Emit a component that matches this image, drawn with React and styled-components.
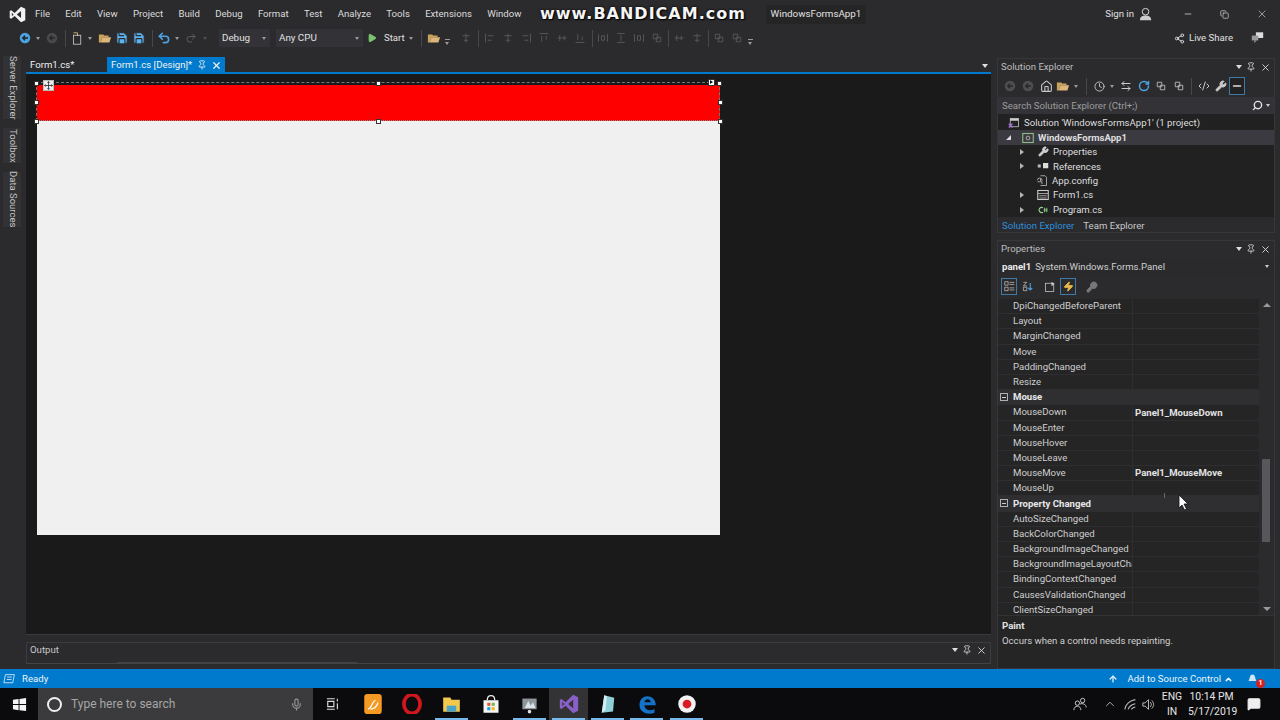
import React from 'react';
import styled, { createGlobalStyle } from 'styled-components';
import { X, Pin, Home, Wrench, Search, Minus, Copy, RotateCw, Clock, ArrowUp, ChevronUp, MessageSquare, Mic, Save, Undo2, Redo2, Play, Share2, ArrowLeftRight, Code2, KeyRound, Zap } from 'lucide-react';

const Global = createGlobalStyle`
  html, body { margin: 0; padding: 0; background: #2d2d30; }
  * { box-sizing: border-box; }
`;

const Page = styled.div`
  width: 1280px; height: 720px; overflow: hidden; display: flex; flex-direction: column;
  background: #2b2b2d; color: #d4d4d4; font: 9.6px/1.2 Roboto, "Liberation Sans", sans-serif;
`;
const TitleBar = styled.header`height: 27px; display: flex; align-items: center; padding: 1px 0 0 9px; position: relative;`;
const Logo = styled.svg`width: 17px; height: 17px; margin-right: 9px; flex: none; color: #f2f2f2;`;
const Menu = styled.nav`display: flex; gap: 15.3px; color: #dcdcdc; width: 487px; flex: none; white-space: nowrap;`;
const Watermark = styled.div`
  margin-left: 18px; width: 206px; flex: none; color: #f5f5f5; font: 700 16px/1 "DejaVu Sans", sans-serif; white-space: nowrap;
  letter-spacing: 1px; text-shadow: 0 0 3px #000, 1px 1px 1px #000;
`;
const ProjectName = styled.div`
  margin-left: 20px; width: 100px; height: 19px; display: flex; align-items: center; justify-content: center;
  background: #252526; color: #e2e2e2; font-size: 9.8px;
`;
const SignIn = styled.div`margin-left: auto; display: flex; align-items: center; gap: 5px; color: #e0e0e0; margin-right: 15px;`;
const WindowBtn = styled.div`width: 37px; display: flex; justify-content: center; color: #c8c8c8;`;
const UserGlyph = styled.svg`width: 15px; height: 15px;`;

const ToolBar = styled.div`height: 22px; display: flex; align-items: center; padding-left: 18px;`;
const Slot = styled.div`
  width: ${p => p.$w}px; flex: none; display: flex; align-items: center; justify-content: center; height: 18px;
  opacity: ${p => p.$dim ? .32 : 1}; color: ${p => p.$c || '#c8c8c8'};
`;
const Sep = styled.div`width: ${p => p.$w || 6}px; flex: none; height: 17px; position: relative; &::after { content: ''; position: absolute; left: 50%; top: 0; height: 100%; width: 1px; background: #48484b; }`;
const Caret = styled.i`display: block; width: 0; height: 0; border-left: ${p => p.$big ? 3.5 : 2.5}px solid transparent; border-right: ${p => p.$big ? 3.5 : 2.5}px solid transparent; border-top: ${p => p.$big ? 4 : 3}px solid ${p => p.$c || '#9a9a9a'};`;
const CaretBar = styled.i`display: block; width: 5px; height: 6px; border-top: 1px solid #999; position: relative; margin-top: 8px; &::after { content: ''; position: absolute; left: 0; top: 2px; border-left: 2.5px solid transparent; border-right: 2.5px solid transparent; border-top: 3px solid #999; }`;
const Combo = styled.div`
  width: ${p => p.$w}px; margin-left: ${p => p.$ml}px; height: 18px; flex: none; background: #333337; display: flex; align-items: center; justify-content: space-between;
  padding: 0 4px 0 3px; color: #e0e0e0; font-size: 9.8px;
`;
const StartLabel = styled.span`color: #e0e0e0; margin-left: 3px; width: 21px; flex: none;`;
const LiveShare = styled.div`margin-left: auto; display: flex; align-items: center; gap: 4px; margin-right: 18px; color: #e0e0e0;`;
const FeedbackBox = styled.svg`width: 13px; height: 14px; margin-right: 16px;`;

const Main = styled.main`flex: 1; min-height: 0; display: flex; padding-top: 7px;`;
const SideRail = styled.aside`width: 26px; flex: none; display: flex; flex-direction: column; gap: 9px;`;
const RailTab = styled.div`
  writing-mode: vertical-rl; height: ${p => p.$h}px; margin-left: 3px; width: 18px; display: flex; align-items: center; padding-left: 2px;
  justify-content: center; background: #323235; color: #c4c4c4; font-size: 9.5px; white-space: nowrap;
`;
const Center = styled.section`width: 965px; flex: none; display: flex; flex-direction: column; padding-bottom: 5px;`;
const TabStrip = styled.div`height: 15px; margin-top: 1px; display: flex; position: relative; flex: none;`;
const FileTab = styled.div`
  width: ${p => p.$w}px; flex: none; display: flex; align-items: center; padding-left: ${p => p.$pl}px; height: 16px;
  background: ${p => p.$active ? '#007acc' : 'transparent'}; color: #f2f2f2; white-space: nowrap;
`;
const Overflow = styled.div`position: absolute; right: 3px; top: 7px;`;
const Rule = styled.div`height: 2px; background: #007acc; flex: none;`;
const Designer = styled.div`flex: 1; min-height: 0; background: #1a1a1b; border-bottom: 1px solid #3a3a3d; padding: 11px 0 0 11px; display: flex; flex-direction: column;`;
const FormBody = styled.div`width: 683px; height: 450px; background: #f0f0f0; position: relative; flex: none;`;
const RedPanel = styled.div`height: 36px; background: #ff0000; border-bottom: 1px dotted #888;`;
const Selection = styled.div`position: absolute; left: -1px; top: -3px; width: 684px; height: 39px; border: 1px dashed #77777a; border-bottom: 0;`;
const Handle = styled.i`position: absolute; width: 5px; height: 5px; background: #fff; border: 1px solid #333; left: ${p => p.$x}px; top: ${p => p.$y}px;`;
const MoveGlyph = styled.div`position: absolute; left: 6px; top: -5px; width: 11px; height: 11px; background: #ececec; border: 1px solid #bbb; display: flex; align-items: center; justify-content: center;`;
const SmartTag = styled.div`position: absolute; left: 671px; top: -6px; width: 7px; height: 7px; background: #fff; border: 1px solid #333; &::after { content: ''; position: absolute; left: 1px; top: 0; border-left: 3px solid #111; border-top: 2.5px solid transparent; border-bottom: 2.5px solid transparent; }`;
const OutputPanel = styled.div`height: 22px; margin-top: 7px; border: 1px solid #3c3c3f; border-bottom-color: #444; display: flex; align-items: center; padding: 0 3px 6px 3px; position: relative; flex: none;`;
const OutputLabel = styled.span`color: #c8c8c8; margin-right: 5px;`;
const Ghost = styled.i`position: absolute; left: 90px; bottom: 0; width: 240px; height: 1px; background: #414144;`;
const Grip = styled.div`flex: 1; height: 5px; background-image: radial-gradient(#4a4a4d 40%, transparent 45%); background-size: 2px 2px;`;
const HeadIcons = styled.div`display: flex; align-items: center; gap: 4px; margin-left: 8px; color: #d8d8d8;`;

const Right = styled.section`width: 278px; margin-left: 6px; flex: none; display: flex; flex-direction: column; padding-top: 2px;`;
const Dock = styled.div`border: 1px solid #37373a; height: ${p => p.$h}px; display: flex; flex-direction: column; margin-bottom: ${p => p.$mb || 0}px;`;
const DockHead = styled.div`height: 16px; display: flex; align-items: center; padding: 0 3px 0 3px; color: #bdbdbd; flex: none;`;
const SolTools = styled.div`height: 22px; display: flex; align-items: center; padding-left: 3px; flex: none;`;
const ActiveBtn = styled.div`width: 16px; height: 18px; border: 1px solid #3d7aa8; background: #222; display: flex; align-items: center; justify-content: center; flex: none;`;
const SearchRow = styled.div`height: 17px; display: flex; align-items: center; justify-content: space-between; background: #333337; padding: 0 4px 0 4px; color: #9c9c9c; flex: none;`;
const SearchEnd = styled.div`display: flex; align-items: center; gap: 3px; color: #e5e5e5;`;
const Tree = styled.div`flex: 1; background: #212122; padding-top: 2px;`;
const TreeRow = styled.div`height: 14.4px; display: flex; align-items: center; padding-left: ${p => p.$pl}px; background: ${p => p.$sel ? '#3a3a40' : 'transparent'}; font-weight: ${p => p.$sel ? 700 : 400}; color: #dedede;`;
const Arrow = styled.i`width: 0; height: 0; flex: none; border-left: 4px solid #b5b5b5; border-top: 3.5px solid transparent; border-bottom: 3.5px solid transparent; margin-right: ${p => p.$mr}px; position: relative;`;
const ArrowOpen = styled.i`width: 0; height: 0; flex: none; border-bottom: 5px solid #ddd; border-left: 5px solid transparent; margin-right: ${p => p.$mr}px;`;
const Spacer = styled.i`width: ${p => p.$w}px; flex: none;`;
const NodeIcon = styled.span`width: 12px; height: 12px; flex: none; margin-right: ${p => p.$mr ?? 4}px; display: flex; align-items: center; justify-content: center; color: #ddd;`;
const BottomTabs = styled.div`height: 15px; display: flex; flex: none; align-items: center; padding-top: 2px;`;
const BottomTab = styled.span`padding: 0 4px 0 4px; color: ${p => p.$on ? '#2b8fdc' : '#c8c8c8'}; margin-right: ${p => p.$mr || 0}px;`;
const ObjectRow = styled.div`height: 18px; margin-top: 1px; display: flex; align-items: center; padding: 0 5px 1px 4px; gap: 4px; background: #2a2a2c; flex: none;`;
const Strong = styled.b`color: #eaeaea;`;
const ObjectType = styled.span`color: #cfcfcf; flex: 1;`;
const PropTools = styled.div`height: 23px; display: flex; align-items: center; padding: 0 0 2px 3px; flex: none;`;
const ToggleBtn = styled.div`width: 16px; height: 17px; flex: none; display: flex; align-items: center; justify-content: center; margin-right: ${p => p.$mr || 0}px; border: 1px solid ${p => p.$on ? '#3d7aa8' : 'transparent'}; color: #ccc;`;
const GridWrap = styled.div`flex: none; height: 316px; display: flex; background: #252526; overflow: hidden;`;
const PropList = styled.div`flex: 1; min-width: 0;`;
const PropRow = styled.div`
  height: 15.2px; display: grid; grid-template-columns: 119px 1fr; align-items: center; padding-left: 15px; position: relative;
  color: #cfcfcf; border-bottom: 1px solid #2e2e30;
  background: ${p => p.$cat ? '#2f2f32' : 'transparent'}; font-weight: ${p => p.$cat ? 700 : 400};
`;
const PropName = styled.span`overflow: hidden; white-space: nowrap; line-height: 14px; color: ${p => p.$cat ? '#e8e8e8' : 'inherit'};`;
const PropValue = styled.span`font-weight: 700; color: #e2e2e2; padding-left: 2px; border-left: 1px solid ${p => p.$cat ? 'transparent' : '#2e2e30'}; height: 100%; display: flex; align-items: center;`;
const Expander = styled.i`position: absolute; left: 2px; top: 3px; width: 8px; height: 8px; border: 1px solid #b0b0b0; &::after { content: ''; position: absolute; left: 1px; right: 1px; top: 2.5px; height: 1px; background: #ccc; }`;
const ScrollBar = styled.div`width: 15px; display: flex; flex-direction: column; align-items: center; padding: 4px 0; justify-content: space-between; position: relative; background: #2b2b2d;`;
const ScrollThumb = styled.i`position: absolute; left: 3px; width: 8px; top: 160px; height: 83px; background: #58585c;`;
const CaretUp = styled.i`border-left: 4px solid transparent; border-right: 4px solid transparent; border-bottom: 4px solid #999;`;
const CaretDown = styled.i`border-left: 4px solid transparent; border-right: 4px solid transparent; border-top: 4px solid #999;`;
const Description = styled.div`flex: 1; padding: 4px 4px; background: #252526; border-top: 1px solid #333; color: #cfcfcf;`;
const DescTitle = styled.div`font-weight: 700; margin-bottom: 3px; color: #e2e2e2;`;
const PointerWrap = styled.svg`position: absolute; left: 1178px; top: 494px; width: 11px; height: 17px;`;
const Tick = styled.i`position: absolute; left: 1164px; top: 493px; width: 1px; height: 5px; background: #666;`;

const StatusBar = styled.footer`height: 19px; flex: none; background: #007acc; color: #eaf5fc; display: flex; align-items: center; padding: 1px 0 0 3px;`;
const ReadyText = styled.span`margin-left: 6px;`;
const SourceCtl = styled.div`margin-left: auto; display: flex; align-items: center; gap: 3px;`;
const BellWrap = styled.div`width: 16px; height: 14px; margin: 0 18px 0 13px; position: relative; color: #cfe6f6;`;
const Badge = styled.b`position: absolute; right: -3px; bottom: -2px; width: 9px; height: 9px; border-radius: 50%; background: #d81e1e; color: #fff; font-size: 7px; line-height: 9px; text-align: center;`;

const TaskBar = styled.footer`height: 32px; flex: none; background: #0b0b0d; display: flex; align-items: center; color: #e6e6e6;`;
const StartBtn = styled.div`width: 38px; display: flex; justify-content: center;`;
const SearchBox = styled.div`width: 275px; height: 32px; background: #3b3b3d; display: flex; align-items: center; padding: 0 10px 0 9px; color: #a6a6a6; font-size: 12px; flex: none;`;
const Ring = styled.i`width: 15px; height: 15px; border: 2px solid #eee; border-radius: 50%; margin-right: 9px; flex: none;`;
const SearchHint = styled.span`flex: 1;`;
const TaskSlot = styled.div`width: 39px; height: 32px; flex: none; display: flex; align-items: center; justify-content: center; position: relative; color: #8a5fc8; background: ${p => p.$active ? '#333336' : 'transparent'}; margin-left: ${p => p.$ml || 0}px;
  &::after { content: ''; display: ${p => p.$open ? 'block' : 'none'}; position: absolute; left: 3px; right: 3px; bottom: 0; height: 2px; background: #76b9ed; }`;
const Tray = styled.div`margin-left: auto; display: flex; align-items: center; height: 32px; color: #ddd;`;
const TrayIcon = styled.div`width: ${p => p.$w}px; display: flex; justify-content: center; flex: none;`;
const TrayStack = styled.div`width: ${p => p.$w}px; text-align: center; flex: none; line-height: 15px; font-size: 10.4px; color: #e4e4e4;`;

const S = ({ s = 12, children, vb = '0 0 16 16', ...r }) => <svg width={s} height={s} viewBox={vb} {...r}>{children}</svg>;
const vsPath = 'M17 1 L8 10 L3 6 L1 7 V17 L3 18 L8 14 L17 23 L23 20 V4 Z M4 9.5 L6.5 12 L4 14.5 Z M17 7 V17 L11 12 Z';
const Circle = ({ c, arrow }) => <S s={12}><circle cx="8" cy="8" r="7" fill={c} />{arrow && <path d="M12 8H5M8 5L5 8l3 3" stroke="#222" strokeWidth="1.8" fill="none" />}</S>;
const Folder = ({ s = 14 }) => <S s={s}><path d="M1 4h5l1 1h5v2H5L3 13H1z" fill="#c9a35a" /><path d="M5 7h10l-2 6H3z" fill="#dcb67a" /></S>;
const Faded = ({ d }) => <S s={12}><path d={d} stroke="#bbb" strokeWidth="1.2" fill="none" /></S>;
const fadeA = 'M2 2v12M5 5h8M5 11h5', fadeB = 'M8 2v12M3 5h10M5 11h6', fadeC = 'M14 2v12M3 5h8M6 11h5', fadeD = 'M2 2h12M5 5v8M11 5v5', fadeE = 'M2 8h12M5 4v8M11 5v6', fadeF = 'M2 14h12M5 3v8M11 6v5', fadeG = 'M2 3v10M14 3v10M6 5h4v6H6z', fadeH = 'M3 2h10M3 14h10M8 4v8', fadeI = 'M3 3h6v6H3zM7 7h6v6H7z';

const menu = ['File', 'Edit', 'View', 'Project', 'Build', 'Debug', 'Format', 'Test', 'Analyze', 'Tools', 'Extensions', 'Window'];
const props = [
  ['DpiChangedBeforeParent'], ['Layout'], ['MarginChanged'], ['Move'], ['PaddingChanged'], ['Resize'],
  ['Mouse', '', true], ['MouseDown', 'Panel1_MouseDown'], ['MouseEnter'], ['MouseHover'], ['MouseLeave'], ['MouseMove', 'Panel1_MouseMove'], ['MouseUp'],
  ['Property Changed', '', true], ['AutoSizeChanged'], ['BackColorChanged'], ['BackgroundImageChanged'], ['BackgroundImageLayoutChanged'], ['BindingContextChanged'], ['CausesValidationChanged'], ['ClientSizeChanged'],
];
const handles = [[-3, -4], [339, -4], [680, -4], [-3, 15], [681, 15], [-3, 34], [339, 34], [681, 34]];

const PanelHead = ({ title }) => (
  <DockHead>{title}<Spacer $w={6} /><Grip /><HeadIcons><Caret $big $c="#ddd" /><Pin size={10} /><X size={11} /></HeadIcons></DockHead>
);

export default function App() {
  return (
    <Page>
      <Global />
      <TitleBar>
        <Logo viewBox="0 0 24 24"><path d={vsPath} fill="currentColor" fillRule="evenodd" /></Logo>
        <Menu>{menu.map(m => <span key={m}>{m}</span>)}</Menu>
        <Watermark>www.BANDICAM.com</Watermark>
        <ProjectName>WindowsFormsApp1</ProjectName>
        <SignIn>Sign in<UserGlyph viewBox="0 0 16 16"><circle cx="7" cy="5" r="3.5" fill="none" stroke="#ddd" /><path d="M1 14c0-4 3-5 6-5s6 1 6 5z" fill="#ccc" /></UserGlyph></SignIn>
        <WindowBtn><Minus size={10} /></WindowBtn>
        <WindowBtn><Copy size={9} /></WindowBtn>
        <WindowBtn><X size={12} strokeWidth={1.4} /></WindowBtn>
      </TitleBar>

      <ToolBar>
        <Slot $w={14}><Circle c="#4aa3e0" arrow /></Slot><Slot $w={12}><Caret /></Slot>
        <Slot $w={16} $dim><Circle c="#888" arrow /></Slot><Sep $w={10} />
        <Slot $w={14}><S s={13}><rect x="3" y="4" width="9" height="11" fill="none" stroke="#ccc" /><path d="M3 1h5v4" stroke="#e8c77a" fill="none" /></S></Slot><Slot $w={12}><Caret /></Slot>
        <Slot $w={18}><Folder /></Slot>
        <Slot $w={16} $c="#5cb2ee"><Save size={14} fill="#5cb2ee" stroke="#2d2d30" /></Slot>
        <Slot $w={18} $c="#5cb2ee"><Save size={14} fill="#5cb2ee" stroke="#2d2d30" /></Slot><Sep $w={7} />
        <Slot $w={17} $c="#4aa3e0"><Undo2 size={14} strokeWidth={2.8} /></Slot><Slot $w={10}><Caret /></Slot>
        <Slot $w={18} $dim><Redo2 size={12} /></Slot><Slot $w={10} $dim><Caret /></Slot>
        <Combo $w={51} $ml={9}>Debug<Caret /></Combo>
        <Combo $w={87} $ml={6}>Any CPU<Caret /></Combo>
        <Slot $w={18} $c="#7cc36e"><Play size={10} fill="#7cc36e" /></Slot>
        <StartLabel>Start</StartLabel>
        <Slot $w={12}><Caret /></Slot><Sep $w={8} />
        <Slot $w={18}><Folder /></Slot><Slot $w={9}><CaretBar /></Slot><Spacer $w={5} />
        {[fadeB].map((d, i) => <Slot key={i} $w={18} $dim><Faded d={d} /></Slot>)}<Sep $w={6} />
        {[fadeA, fadeB, fadeC].map((d, i) => <Slot key={i} $w={18} $dim><Faded d={d} /></Slot>)}
        {[fadeD, fadeE, fadeF].map((d, i) => <Slot key={i} $w={18} $dim><Faded d={d} /></Slot>)}<Sep $w={5} />
        {[fadeG, fadeH, fadeG, fadeI].map((d, i) => <Slot key={i} $w={18} $dim><Faded d={d} /></Slot>)}<Sep $w={4} />
        {[fadeE, fadeB].map((d, i) => <Slot key={i} $w={18} $dim><Faded d={d} /></Slot>)}<Sep $w={4} />
        <Slot $w={18} $dim><Faded d={fadeI} /></Slot><Slot $w={18} $dim><Faded d={fadeI} /></Slot><Slot $w={8}><CaretBar /></Slot>
        <LiveShare><Share2 size={11} />Live Share</LiveShare>
        <FeedbackBox viewBox="0 0 16 16"><rect x="6" y="1" width="9" height="7" fill="#ddd" /><rect x="1" y="5" width="8" height="6" fill="#999" /><path d="M4 14v-3h3" fill="#999" /></FeedbackBox>
      </ToolBar>

      <Main>
        <SideRail>
          <RailTab $h={63}>Server Explorer</RailTab>
          <RailTab $h={35}>Toolbox</RailTab>
          <RailTab $h={55}>Data Sources</RailTab>
        </SideRail>
        <Center>
          <TabStrip>
            <FileTab $w={81} $pl={4}>Form1.cs*</FileTab>
            <FileTab $w={118} $pl={4} $active>Form1.cs [Design]*<Spacer $w={5} /><Pin size={10} /><Spacer $w={4} /><X size={11} strokeWidth={2.6} /></FileTab>
            <Overflow><Caret $big $c="#ddd" /></Overflow>
          </TabStrip>
          <Rule />
          <Designer>
            <FormBody>
              <RedPanel />
              <Selection />
              {handles.map(([x, y], i) => <Handle key={i} $x={x} $y={y} />)}
              <MoveGlyph><S s={9}><path d="M8 1v14M1 8h14M8 1L6 3M8 1l2 2M8 15l-2-2M8 15l2-2M1 8l2-2M1 8l2 2M15 8l-2-2M15 8l-2 2" stroke="#222" strokeWidth="1.4" fill="none" /></S></MoveGlyph>
              <SmartTag />
            </FormBody>
          </Designer>
          <OutputPanel>
            <OutputLabel>Output</OutputLabel><Grip />
            <HeadIcons><Caret $big $c="#ddd" /><Pin size={10} /><X size={11} /></HeadIcons>
            <Ghost />
          </OutputPanel>
        </Center>
        <Right>
          <Dock $h={175} $mb={7}>
            <PanelHead title="Solution Explorer" />
            <SolTools>
              <Slot $w={18} $dim><Circle c="#999" arrow /></Slot><Slot $w={18} $dim><Circle c="#999" arrow /></Slot>
              <Slot $w={18}><Home size={13} /></Slot><Slot $w={16}><Folder /></Slot><Slot $w={10}><Caret /></Slot>
              <Sep $w={10} /><Slot $w={16}><Clock size={11} /></Slot><Slot $w={10}><Caret /></Slot>
              <Slot $w={18} $c="#ccc"><ArrowLeftRight size={12} /></Slot><Slot $w={17} $c="#4aa3e0"><RotateCw size={12} strokeWidth={3} /></Slot>
              <Slot $w={18}><Faded d={fadeI} /></Slot><Slot $w={17}><Faded d={fadeI} /></Slot><Sep $w={8} />
              <Slot $w={17}><Code2 size={12} /></Slot><Slot $w={17}><Wrench size={12} fill="#ccc" /></Slot>
              <ActiveBtn><Minus size={12} strokeWidth={3} color="#ddd" /></ActiveBtn>
            </SolTools>
            <SearchRow>Search Solution Explorer (Ctrl+;)<SearchEnd><Search size={11} strokeWidth={3} style={{ transform: 'scaleX(-1)' }} /><Caret $c="#ccc" /></SearchEnd></SearchRow>
            <Tree>
              <TreeRow $pl={10}><NodeIcon $mr={4}><S s={12}><rect x="3" y="2" width="11" height="11" fill="none" stroke="#ccc" /><rect x="3" y="2" width="11" height="3" fill="#ccc" /><path d="M1 9l5 5M6 9l-5 5" stroke="#a678dc" strokeWidth="1.5" /></S></NodeIcon>Solution 'WindowsFormsApp1' (1 project)</TreeRow>
              <TreeRow $pl={8} $sel><ArrowOpen $mr={11} /><NodeIcon $mr={4}><S s={12}><rect x="1" y="2" width="14" height="12" fill="none" stroke="#8fb98a" strokeWidth="1.5" /><circle cx="8" cy="8" r="2.5" fill="none" stroke="#ccc" /></S></NodeIcon>WindowsFormsApp1</TreeRow>
              <TreeRow $pl={22}><Arrow $mr={13} /><NodeIcon><Wrench size={11} fill="#ccc" /></NodeIcon>Properties</TreeRow>
              <TreeRow $pl={22}><Arrow $mr={13} /><NodeIcon><S s={12}><rect x="1" y="6" width="4" height="4" fill="#bbb" /><rect x="8" y="4" width="7" height="7" fill="#ddd" /></S></NodeIcon>References</TreeRow>
              <TreeRow $pl={38}><NodeIcon><S s={12}><path d="M6 1h6l2 2v11H6M6 5v3M2 7a3 3 0 0 1 6 0v1M2 9h6v3" stroke="#ccc" fill="none" /></S></NodeIcon>App.config</TreeRow>
              <TreeRow $pl={22}><Arrow $mr={13} /><NodeIcon><S s={12}><rect x="1" y="2" width="14" height="12" fill="none" stroke="#ccc" strokeWidth="1.4" /><path d="M1 6h14M3 9h10M3 12h10" stroke="#ccc" /></S></NodeIcon>Form1.cs</TreeRow>
              <TreeRow $pl={22}><Arrow $mr={13} /><NodeIcon><S s={12}><path d="M8 5a3.5 3.5 0 1 0 0 6" stroke="#8fd18a" strokeWidth="1.6" fill="none" /><path d="M10 5v6M13 5v6M9 7h5M9 9h5" stroke="#8fd18a" /></S></NodeIcon>Program.cs</TreeRow>
            </Tree>
            <BottomTabs><BottomTab $on $mr={1}>Solution Explorer</BottomTab><BottomTab>Team Explorer</BottomTab></BottomTabs>
          </Dock>
          <Dock $h={429}>
            <PanelHead title="Properties" />
            <ObjectRow><Strong>panel1</Strong><ObjectType>System.Windows.Forms.Panel</ObjectType><Caret $c="#ccc" /></ObjectRow>
            <PropTools>
              <ToggleBtn $on $mr={2}><S s={11}><path d="M1 1h5v5H1zM8 2h7M8 5h7M1 9h5v5H1zM8 10h7M8 13h7" stroke="#ccc" fill="none" /></S></ToggleBtn>
              <ToggleBtn $mr={7}><S s={11}><path d="M2 2h5L2 7h5M2 9h5v5H2z" stroke="#ccc" fill="none" /><path d="M12 3v10m-3-3 3 3 3-3" stroke="#4aa3e0" strokeWidth="1.6" fill="none" /></S></ToggleBtn>
              <ToggleBtn $mr={2}><S s={12}><rect x="2" y="3" width="11" height="11" fill="none" stroke="#ccc" /><path d="M10 1l4 3-4 3z" fill="#ccc" /></S></ToggleBtn>
              <ToggleBtn $on $mr={8}><Zap size={11} color="#e8b84a" fill="#e8b84a" /></ToggleBtn>
              <ToggleBtn><KeyRound size={12} color="#777" fill="#777" /></ToggleBtn>
            </PropTools>
            <GridWrap>
              <PropList>
                {props.map(([n, v, cat]) => (
                  <PropRow key={n} $cat={cat}>
                    {cat && <Expander />}
                    <PropName $cat={cat}>{n}</PropName>
                    <PropValue $cat={cat}>{v}</PropValue>
                  </PropRow>
                ))}
              </PropList>
              <ScrollBar><CaretUp /><ScrollThumb /><CaretDown /></ScrollBar>
            </GridWrap>
            <Description><DescTitle>Paint</DescTitle>Occurs when a control needs repainting.</Description>
          </Dock>
        </Right>
      </Main>

      <Tick />
      <PointerWrap viewBox="0 0 11 17"><path d="M1 1v13l3-3 2.5 5 2-1-2.5-5h4z" fill="#fff" stroke="#111" strokeWidth=".8" /></PointerWrap>

      <StatusBar>
        <S s={13}><path d="M3 2h11l-2 10H1zM5 5h6M4.500 8h6" stroke="#e0f0fb" fill="none" /></S>
        <ReadyText>Ready</ReadyText>
        <SourceCtl><ArrowUp size={10} strokeWidth={3} /><Spacer $w={3} />Add to Source Control<ChevronUp size={9} strokeWidth={4} /></SourceCtl>
        <BellWrap><S s={13}><path d="M3 11c2-2 1-8 5-8s3 6 5 8z" fill="#cfe6f6" /></S><Badge>1</Badge></BellWrap>
      </StatusBar>

      <TaskBar>
        <StartBtn><S s={15}><path d="M1 3l6-1v5.500H1zM8 2l7-1v6.500H8zM1 8.500h6V14l-6-1zM8 8.500h7V15l-7-1z" fill="#f4f4f4" /></S></StartBtn>
        <SearchBox><Ring /><SearchHint>Type here to search</SearchHint><Mic size={13} color="#9a9a9a" /></SearchBox>
        <TaskSlot><S s={14}><path d="M1 2h9M1 14h9M2 5h7v6H2zM13 2v3M13 7v7" stroke="#ddd" strokeWidth="1.3" fill="none" /></S></TaskSlot>
        <TaskSlot $ml={1}><S s={20}><rect x="1" y="0" width="14" height="16" rx="2.500" fill="#f59a23" /><path d="M4 12c3 0 3-6 6-7M6 12c3 0 5-2 6-5" stroke="#fff" fill="none" /></S></TaskSlot>
        <TaskSlot><S s={20}><ellipse cx="8" cy="8" rx="6.500" ry="7.500" fill="none" stroke="#d2161f" strokeWidth="3" /></S></TaskSlot>
        <TaskSlot $open $ml={1}><S s={19}><path d="M1 2h6l1 2h7v10H1z" fill="#f2c94c" /><rect x="4" y="9" width="8" height="5" fill="#4aa3c8" /></S></TaskSlot>
        <TaskSlot><S s={20}><rect x="2" y="5" width="12" height="10" fill="#f5f5f5" /><path d="M5 5c0-5 6-5 6 0" stroke="#eee" fill="none" /><rect x="5" y="7" width="2.500" height="2.500" fill="#e8532b" /><rect x="8.500" y="7" width="2.500" height="2.500" fill="#7cb742" /><rect x="5" y="10.500" width="2.500" height="2.500" fill="#1ba1e2" /><rect x="8.500" y="10.500" width="2.500" height="2.500" fill="#fdb813" /></S></TaskSlot>
        <TaskSlot $open><S s={19}><path d="M2 3h12v9H2z" fill="#8f969c" /><path d="M4 11l3-6 2 4 2-3 2 5z" fill="#dce3e8" /><circle cx="8" cy="14" r="1.500" fill="#ddd" /></S></TaskSlot>
        <TaskSlot $active $open><S s={20} vb="0 0 24 24"><path d={vsPath} fill="currentColor" fillRule="evenodd" /></S></TaskSlot>
        <TaskSlot $open><S s={20}><path d="M5 1l8 2-1 11-9 1z" fill="#8fd0d8" /><path d="M3 15l2-14 2 1-1 11z" fill="#d7eef0" /></S></TaskSlot>
        <TaskSlot $open><S s={20}><path d="M2 9c0-10 13-9 13 0H6c0 4 5 5 8 3v3c-5 2-12 0-12-6zM6 6.500h5c-.5-3-4.500-3-5 0z" fill="#1473c9" fillRule="evenodd" /></S></TaskSlot>
        <TaskSlot $open $ml={1}><S s={20}><circle cx="8" cy="8" r="7" fill="#f2f2f2" /><circle cx="8" cy="8" r="3.500" fill="#d81b25" /></S></TaskSlot>
        <Tray>
          <TrayIcon $w={24}><S s={14}><circle cx="5" cy="7" r="2.500" fill="none" stroke="#ddd" /><circle cx="11" cy="4" r="2.500" fill="none" stroke="#ddd" /><path d="M1 15c0-6 8-6 8 0M8 8c3-1 7 0 7 4" stroke="#ddd" fill="none" /></S></TrayIcon>
          <Spacer $w={8} />
          <TrayIcon $w={20}><ChevronUp size={14} strokeWidth={1.3} /></TrayIcon>
          <TrayIcon $w={20}><S s={13}><path d="M1 14C2 8 7 3 14 2M5 14c1-3 4-6 9-7M9 14c1-1 2-3 5-3" stroke="#bbb" strokeWidth="1.3" fill="none" /></S></TrayIcon>
          <TrayIcon $w={16}><S s={13}><path d="M1 6h3l4-4v12l-4-4H1zM10 5c2 2 2 4 0 6M12 3c3 3 3 7 0 10" stroke="#ddd" fill="none" /></S></TrayIcon>
          <TrayStack $w={32}>ENG<br />IN</TrayStack>
          <TrayStack $w={47}>10:14 PM<br />5/17/2019</TrayStack>
          <TrayIcon $w={38}><MessageSquare size={14} fill="#eee" color="#eee" /></TrayIcon>
          <Spacer $w={7} />
        </Tray>
      </TaskBar>
    </Page>
  );
}
